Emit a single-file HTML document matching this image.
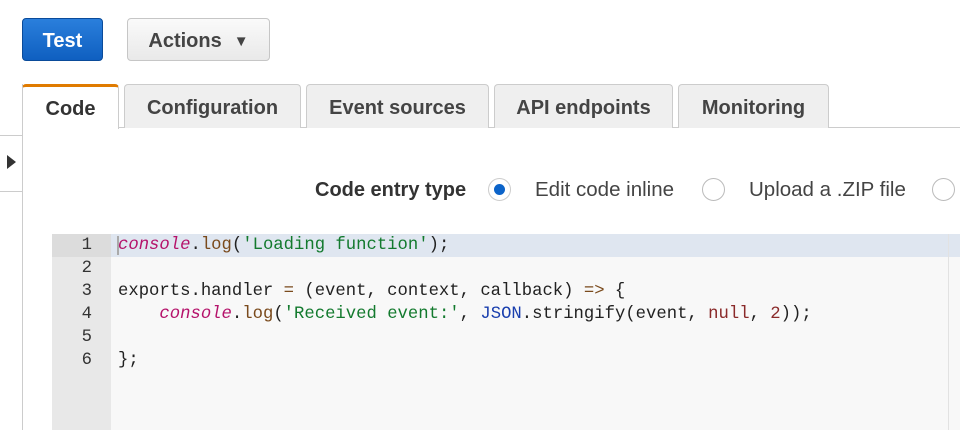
<!DOCTYPE html>
<html><head><style>
*{box-sizing:border-box;margin:0;padding:0}
body{width:960px;height:430px;overflow:hidden;background:#fff;font-family:"Liberation Sans",sans-serif;position:relative}
.a{position:absolute}
.btn{position:absolute;top:18px;height:43px;border-radius:4px;font-weight:bold;font-size:20px;display:flex;align-items:center;justify-content:center;padding-top:4px}
.tab{position:absolute;top:84px;height:44px;background:#efefef;border:1px solid #ccc;border-bottom:none;border-radius:4px 4px 0 0;font-weight:bold;font-size:20px;color:#444;display:flex;align-items:center;justify-content:center;padding-top:3px}
.radio{position:absolute;width:23px;height:23px;border-radius:50%;border:1px solid #bbb;background:#fff;top:178px}
.code{position:absolute;left:118px;font-family:"Liberation Mono",monospace;font-size:17.25px;white-space:pre;color:#222;line-height:23px}
.ln{position:absolute;left:52px;width:40px;text-align:right;font-family:"Liberation Mono",monospace;font-size:17.25px;color:#333;line-height:23px}
.k{color:#b5136b;font-style:italic}.f{color:#7a4a1c}.s{color:#137a2e}.b{color:#1a3fae}.n{color:#8a2a2a}
</style></head><body>
<div class="btn" style="left:22px;width:81px;background:linear-gradient(#2a7fdc,#0f5fc0);border:1px solid #0a4b9a;color:#fff">Test</div>
<div class="btn" style="left:127px;width:143px;background:linear-gradient(#fafafa,#e9e9e9);border:1px solid #c6c6c6;color:#444">Actions <span style="font-size:15px;margin-left:12px">▼</span></div>

<div class="a" style="left:118px;top:127px;width:842px;height:1px;background:#ccc"></div>
<div class="a" style="left:22px;top:84px;width:97px;height:346px;border-left:1px solid #ccc"></div>
<div class="tab" style="left:22px;width:97px;background:#fff;border-top:3px solid #e07b00;height:45px;color:#333;padding-top:2px">Code</div>
<div class="tab" style="left:124px;width:177px">Configuration</div>
<div class="tab" style="left:306px;width:183px">Event sources</div>
<div class="tab" style="left:494px;width:179px">API endpoints</div>
<div class="tab" style="left:678px;width:151px">Monitoring</div>

<div class="a" style="left:0;top:135px;width:22px;height:1px;background:#ccc"></div>
<div class="a" style="left:0;top:191px;width:22px;height:1px;background:#ccc"></div>
<div class="a" style="left:7px;top:155px;width:0;height:0;border-left:9px solid #333;border-top:7px solid transparent;border-bottom:7px solid transparent"></div>

<div class="a" style="left:315px;top:178px;font-weight:bold;font-size:20px;color:#333;line-height:24px">Code entry type</div>
<div class="radio" style="left:488px;border-color:#ccc"><div style="position:absolute;left:5px;top:5px;width:11px;height:11px;border-radius:50%;background:#0b63c9"></div></div>
<div class="a" style="left:535px;top:178px;font-size:20.5px;color:#444;line-height:24px">Edit code inline</div>
<div class="radio" style="left:702px"></div>
<div class="a" style="left:749px;top:178px;font-size:20.5px;color:#444;line-height:24px">Upload a .ZIP file</div>
<div class="radio" style="left:932px"></div>

<div class="a" style="left:52px;top:234px;width:908px;height:196px;background:#f8f8f8"></div>
<div class="a" style="left:52px;top:234px;width:59px;height:196px;background:#e8e8e8"></div>
<div class="a" style="left:111px;top:234px;width:849px;height:23px;background:#dfe6f0"></div>
<div class="a" style="left:52px;top:234px;width:59px;height:23px;background:#dcdcdc"></div>
<div class="a" style="left:948px;top:234px;width:1px;height:196px;background:#e2e2e2"></div>
<div class="a" style="left:117px;top:236px;width:2px;height:19px;background:#aaa"></div>

<div class="ln" style="top:234px">1<br>2<br>3<br>4<br>5<br>6</div>
<div class="code" style="top:234px"><span class="k">console</span>.<span class="f">log</span>(<span class="s">'Loading function'</span>);

exports.handler <span class="f">=</span> (event, context, callback) <span class="f">=&gt;</span> {
    <span class="k">console</span>.<span class="f">log</span>(<span class="s">'Received event:'</span>, <span class="b">JSON</span>.stringify(event, <span class="n">null</span>, <span class="n">2</span>));

};</div>
</body></html>
